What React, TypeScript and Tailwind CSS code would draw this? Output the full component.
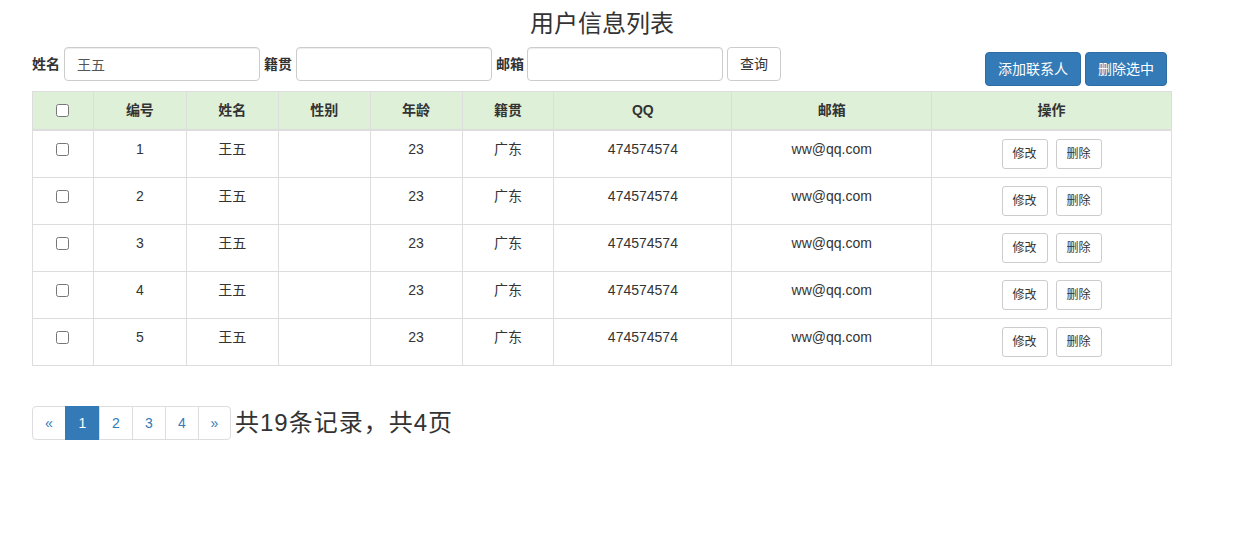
import React from 'react';

const rows = [1, 2, 3, 4, 5];

export default function App() {
  return (
    <div className="min-h-screen bg-white font-['Liberation_Sans','Noto_Sans_CJK_SC',sans-serif] text-[14px] leading-[20px] text-[#333]">
      <div className="ml-[32px] w-[1140px]">
        {/* Title */}
        <h3 className="pt-[10px] text-center text-[24px] leading-[27px] font-normal">用户信息列表</h3>

        {/* Search form + actions */}
        <div className="mt-[10px] flex items-start justify-between">
          <div className="flex items-center h-[34px]">
            <label className="font-bold mr-[4px]">姓名</label>
            <input
              defaultValue="王五"
              className="h-[34px] w-[196px] rounded-[4px] border border-[#ccc] px-[12px] text-[14px] text-[#555] shadow-[inset_0_1px_1px_rgba(0,0,0,0.075)] outline-none"
            />
            <label className="font-bold ml-[4px] mr-[4px]">籍贯</label>
            <input className="h-[34px] w-[196px] rounded-[4px] border border-[#ccc] px-[12px] text-[14px] shadow-[inset_0_1px_1px_rgba(0,0,0,0.075)] outline-none" />
            <label className="font-bold ml-[4px] mr-[3px]">邮箱</label>
            <input className="h-[34px] w-[196px] rounded-[4px] border border-[#ccc] px-[12px] text-[14px] shadow-[inset_0_1px_1px_rgba(0,0,0,0.075)] outline-none" />
            <button className="ml-[4px] h-[34px] w-[54px] rounded-[4px] border border-[#ccc] bg-white text-[14px] text-[#333]">查询</button>
          </div>
          <div className="mt-[5px] mr-[5px] flex gap-[4px]">
            <button className="h-[34px] w-[96px] rounded-[4px] border border-[#2e6da4] bg-[#337ab7] text-[14px] text-white">添加联系人</button>
            <button className="h-[34px] w-[82px] rounded-[4px] border border-[#2e6da4] bg-[#337ab7] text-[14px] text-white">删除选中</button>
          </div>
        </div>

        {/* Table */}
        <table className="mt-[5px] w-[1140px] border-collapse border border-[#ddd] text-center">
          <colgroup>
            <col className="w-[61px]" />
            <col className="w-[93px]" />
            <col className="w-[92px]" />
            <col className="w-[92px]" />
            <col className="w-[92px]" />
            <col className="w-[92px]" />
            <col className="w-[178px]" />
            <col className="w-[200px]" />
            <col className="w-[240px]" />
          </colgroup>
          <thead>
            <tr className="bg-[#dff0d8]">
              <th className="border border-[#ddd] border-b-2 px-[8px] pt-[8px] pb-[9px] align-middle">
                <input type="checkbox" className="mt-[4px] h-[13px] w-[13px] align-top" />
              </th>
              {['编号', '姓名', '性别', '年龄', '籍贯', 'QQ', '邮箱', '操作'].map((h) => (
                <th key={h} className="border border-[#ddd] border-b-2 px-[8px] pt-[8px] pb-[9px] font-bold">{h}</th>
              ))}
            </tr>
          </thead>
          <tbody>
            {rows.map((n) => (
              <tr key={n}>
                <td className="border border-[#ddd] p-[8px] align-top">
                  <input type="checkbox" className="mt-[4px] h-[13px] w-[13px] align-top" />
                </td>
                <td className="border border-[#ddd] p-[8px] align-top">{n}</td>
                <td className="border border-[#ddd] p-[8px] align-top">王五</td>
                <td className="border border-[#ddd] p-[8px] align-top"></td>
                <td className="border border-[#ddd] p-[8px] align-top">23</td>
                <td className="border border-[#ddd] p-[8px] align-top">广东</td>
                <td className="border border-[#ddd] p-[8px] align-top">474574574</td>
                <td className="border border-[#ddd] p-[8px] align-top">ww@qq.com</td>
                <td className="border border-[#ddd] p-[8px] align-top">
                  <div className="flex justify-center gap-[8px]">
                    <button className="h-[30px] w-[46px] rounded-[3px] border border-[#ccc] bg-white text-[12px] text-[#333]">修改</button>
                    <button className="h-[30px] w-[46px] rounded-[3px] border border-[#ccc] bg-white text-[12px] text-[#333]">删除</button>
                  </div>
                </td>
              </tr>
            ))}
          </tbody>
        </table>

        {/* Pagination */}
        <div className="mt-[40px] flex items-center">
          <ul className="flex">
            <li className="h-[34px] w-[34px] flex items-center justify-center rounded-l-[4px] border border-[#ddd] text-[#337ab7]">«</li>
            <li className="-ml-px h-[34px] w-[35px] flex items-center justify-center border border-[#337ab7] bg-[#337ab7] text-white">1</li>
            {[2, 3, 4].map((p) => (
              <li key={p} className="-ml-px h-[34px] w-[34px] flex items-center justify-center border border-[#ddd] text-[#337ab7]">{p}</li>
            ))}
            <li className="-ml-px h-[34px] w-[33px] flex items-center justify-center rounded-r-[4px] border border-[#ddd] text-[#337ab7]">»</li>
          </ul>
          <span className="ml-[4px] text-[24px] leading-[34px] tracking-[1px]">共19条记录，共4页</span>
        </div>
      </div>
    </div>
  );
}
